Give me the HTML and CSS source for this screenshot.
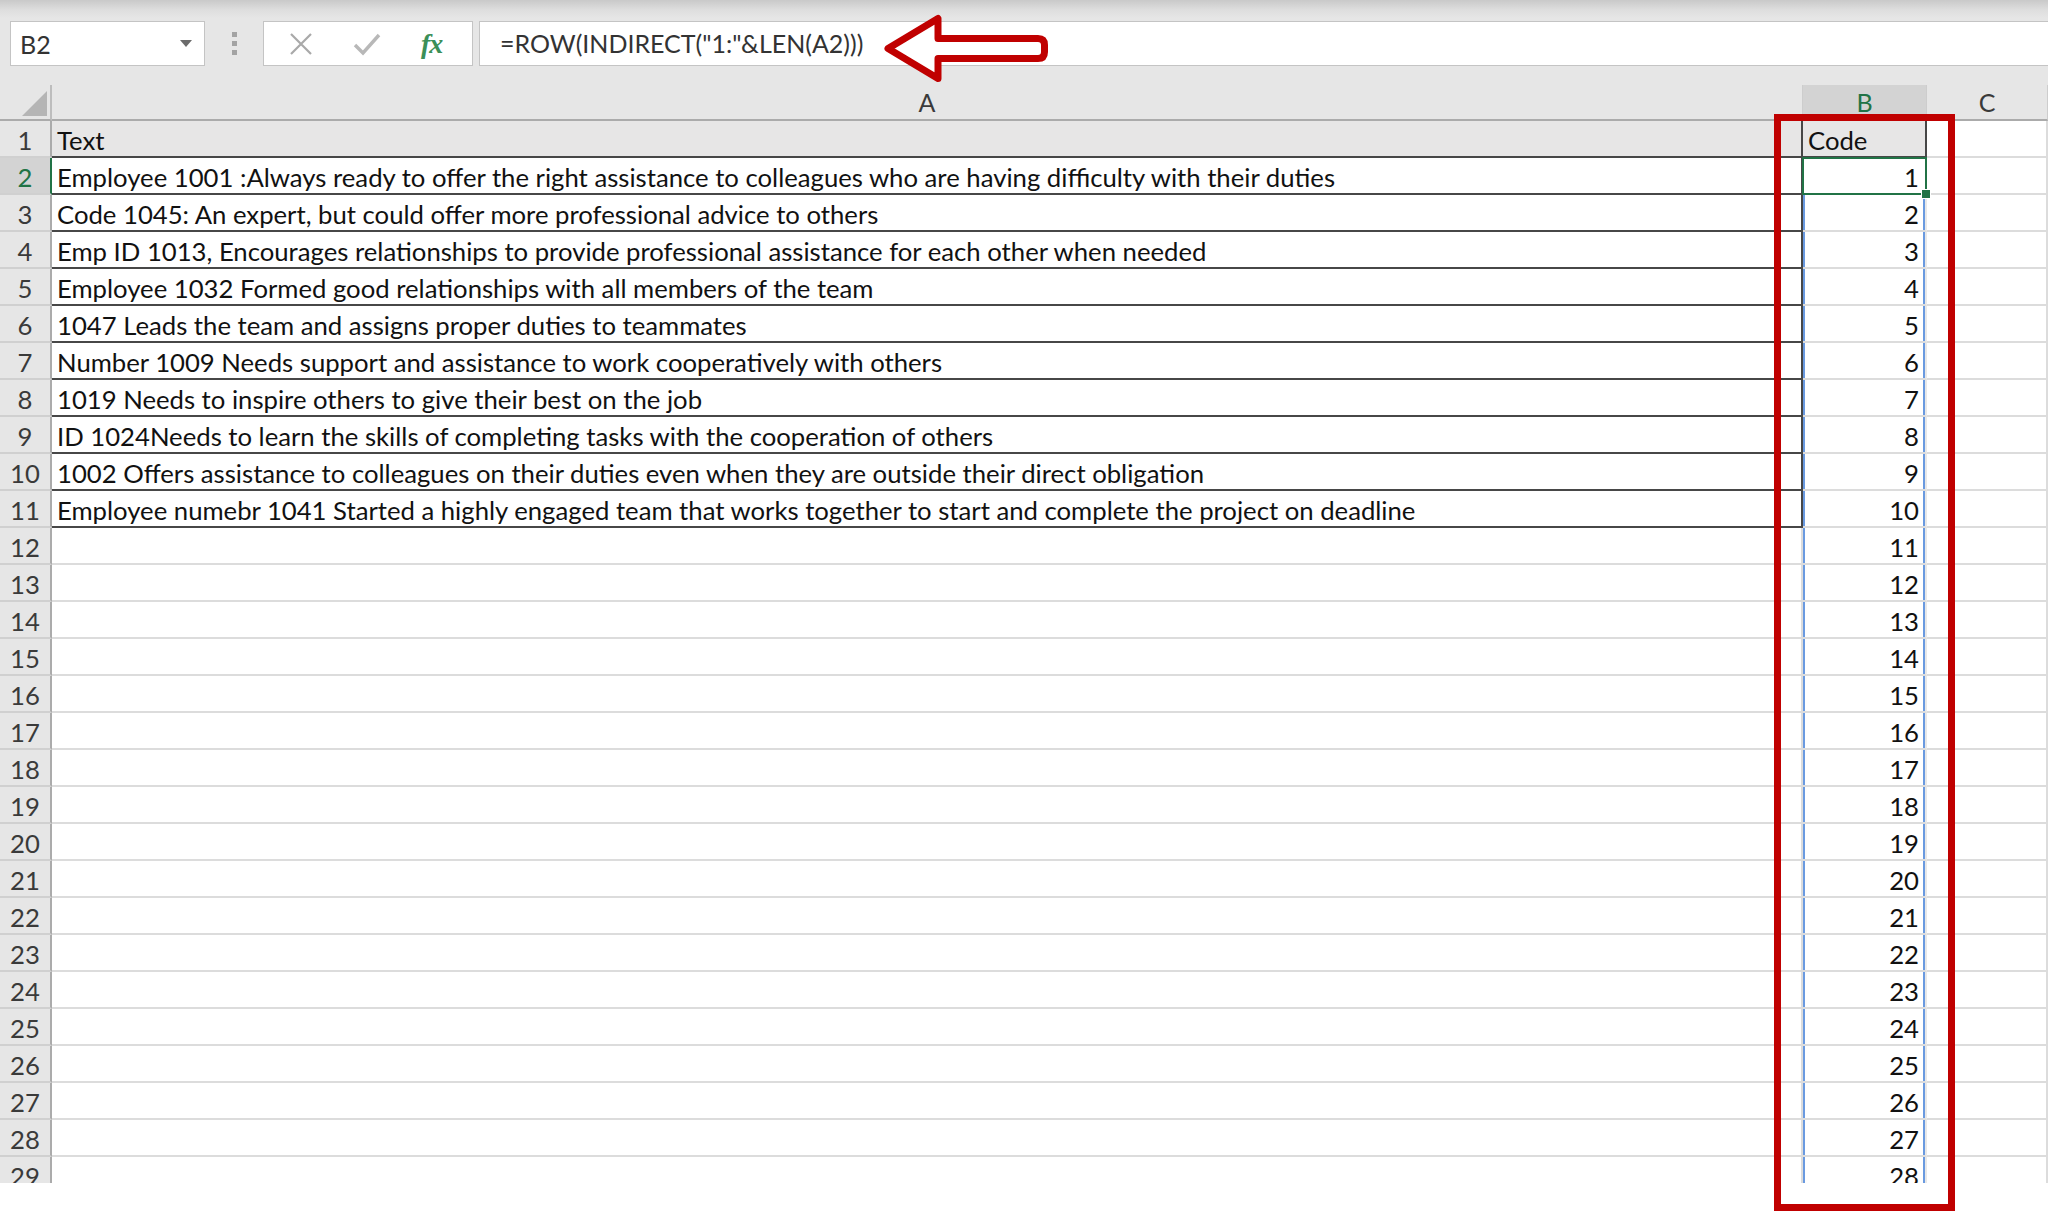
FILE: index.html
```html
<!DOCTYPE html>
<html>
<head>
<meta charset="utf-8">
<link rel="stylesheet" href="styles.css">
</head>
<body>
<div class="app">
  <div class="toolbar">
    <div class="namebox">
      <span class="nb-text">B2</span>
      <svg class="nb-caret" width="12" height="7" viewBox="0 0 12 7"><polygon points="0,0 12,0 6,7" fill="#6b6b6b"/></svg>
    </div>
    <div class="grip"><span></span><span></span><span></span></div>
    <div class="fxbox">
      <svg class="ic" width="24" height="24" viewBox="0 0 24 24"><path d="M2 2 L22 22 M22 2 L2 22" stroke="#a9a9a9" stroke-width="2.2" fill="none"/></svg>
      <svg class="ic" width="28" height="24" viewBox="0 0 28 24"><path d="M2 13 L10 21 L26 3" stroke="#b8b8b8" stroke-width="3.4" fill="none"/></svg>
      <span class="fx">fx</span>
    </div>
    <div class="formula">=ROW(INDIRECT("1:"&amp;LEN(A2)))</div>
  </div>

  <div class="sheet">
    <div class="row head">
      <div class="corner"><svg width="50" height="34" viewBox="0 0 50 34"><polygon points="22,31 47,31 47,6" fill="#b5b5b5"/></svg></div>
      <div class="colh">A</div>
      <div class="colh sel">B</div>
      <div class="colh">C</div>
    </div>

    <div class="row"><div class="rh">1</div><div class="ca dark title">Text</div><div class="cb dark title left">Code</div><div class="cc"></div></div>
    <div class="row"><div class="rh sel">2</div><div class="ca dark">Employee 1001 :Always ready to offer the right assistance to colleagues who are having difficulty with their duties</div><div class="cb active">1<span class="handle"></span></div><div class="cc"></div></div>
    <div class="row"><div class="rh">3</div><div class="ca dark">Code 1045: An expert, but could offer more professional advice to others</div><div class="cb blue">2</div><div class="cc"></div></div>
    <div class="row"><div class="rh">4</div><div class="ca dark">Emp ID 1013, Encourages relationships to provide professional assistance for each other when needed</div><div class="cb blue">3</div><div class="cc"></div></div>
    <div class="row"><div class="rh">5</div><div class="ca dark">Employee 1032 Formed good relationships with all members of the team</div><div class="cb blue">4</div><div class="cc"></div></div>
    <div class="row"><div class="rh">6</div><div class="ca dark">1047 Leads the team and assigns proper duties to teammates</div><div class="cb blue">5</div><div class="cc"></div></div>
    <div class="row"><div class="rh">7</div><div class="ca dark">Number 1009 Needs support and assistance to work cooperatively with others</div><div class="cb blue">6</div><div class="cc"></div></div>
    <div class="row"><div class="rh">8</div><div class="ca dark">1019 Needs to inspire others to give their best on the job</div><div class="cb blue">7</div><div class="cc"></div></div>
    <div class="row"><div class="rh">9</div><div class="ca dark">ID 1024Needs to learn the skills of completing tasks with the cooperation of others</div><div class="cb blue">8</div><div class="cc"></div></div>
    <div class="row"><div class="rh">10</div><div class="ca dark">1002 Offers assistance to colleagues on their duties even when they are outside their direct obligation</div><div class="cb blue">9</div><div class="cc"></div></div>
    <div class="row"><div class="rh">11</div><div class="ca dark">Employee numebr 1041 Started a highly engaged team that works together to start and complete the project on deadline</div><div class="cb blue">10</div><div class="cc"></div></div>
    <div class="row"><div class="rh">12</div><div class="ca"></div><div class="cb blue">11</div><div class="cc"></div></div>
    <div class="row"><div class="rh">13</div><div class="ca"></div><div class="cb blue">12</div><div class="cc"></div></div>
    <div class="row"><div class="rh">14</div><div class="ca"></div><div class="cb blue">13</div><div class="cc"></div></div>
    <div class="row"><div class="rh">15</div><div class="ca"></div><div class="cb blue">14</div><div class="cc"></div></div>
    <div class="row"><div class="rh">16</div><div class="ca"></div><div class="cb blue">15</div><div class="cc"></div></div>
    <div class="row"><div class="rh">17</div><div class="ca"></div><div class="cb blue">16</div><div class="cc"></div></div>
    <div class="row"><div class="rh">18</div><div class="ca"></div><div class="cb blue">17</div><div class="cc"></div></div>
    <div class="row"><div class="rh">19</div><div class="ca"></div><div class="cb blue">18</div><div class="cc"></div></div>
    <div class="row"><div class="rh">20</div><div class="ca"></div><div class="cb blue">19</div><div class="cc"></div></div>
    <div class="row"><div class="rh">21</div><div class="ca"></div><div class="cb blue">20</div><div class="cc"></div></div>
    <div class="row"><div class="rh">22</div><div class="ca"></div><div class="cb blue">21</div><div class="cc"></div></div>
    <div class="row"><div class="rh">23</div><div class="ca"></div><div class="cb blue">22</div><div class="cc"></div></div>
    <div class="row"><div class="rh">24</div><div class="ca"></div><div class="cb blue">23</div><div class="cc"></div></div>
    <div class="row"><div class="rh">25</div><div class="ca"></div><div class="cb blue">24</div><div class="cc"></div></div>
    <div class="row"><div class="rh">26</div><div class="ca"></div><div class="cb blue">25</div><div class="cc"></div></div>
    <div class="row"><div class="rh">27</div><div class="ca"></div><div class="cb blue">26</div><div class="cc"></div></div>
    <div class="row"><div class="rh">28</div><div class="ca"></div><div class="cb blue">27</div><div class="cc"></div></div>
    <div class="row"><div class="rh">29</div><div class="ca"></div><div class="cb blue">28</div><div class="cc"></div></div>
  </div>

  <div class="callout-box"></div>
  <svg class="callout-arrow" width="190" height="82" viewBox="870 8 190 82">
    <path d="M888 48.5 L938 18.5 L938 38.5 L1038 38.5 Q1044.5 38.5 1044.5 45 L1044.5 52 Q1044.5 58.5 1038 58.5 L938 58.5 L938 78.5 Z" fill="#ffffff" stroke="#c00000" stroke-width="7" stroke-linejoin="round"/>
  </svg>
</div>
</body>
</html>
```
FILE: styles.css
```css
html, body {
  margin: 0;
  padding: 0;
  background: #ffffff;
}
body {
  width: 2048px;
  height: 1211px;
  overflow: hidden;
  font-family: Lato, "Open Sans", sans-serif;
  color: #1b1b1b;
}
.app {
  position: relative;
  width: 2048px;
  height: 1211px;
}

/* ---------- formula bar ---------- */
.toolbar {
  height: 85px;
  box-sizing: border-box;
  padding-top: 21px;
  display: flex;
  align-items: flex-start;
  background: linear-gradient(#c9c9c9 0px, #dedede 10px, #e6e6e6 18px, #e6e6e6 100%);
}
.namebox {
  margin-left: 10px;
  width: 195px;
  height: 45px;
  box-sizing: border-box;
  background: #fff;
  border: 1px solid #c4c4c4;
  display: flex;
  align-items: center;
  justify-content: space-between;
  padding: 0 12px 0 9px;
  font-size: 25px;
  color: #333;
}
.grip {
  width: 58px;
  height: 45px;
  display: flex;
  flex-direction: column;
  align-items: center;
  justify-content: center;
  gap: 4px;
}
.grip span {
  width: 5px;
  height: 5px;
  background: #a3a3a3;
}
.fxbox {
  width: 210px;
  height: 45px;
  box-sizing: border-box;
  background: #fff;
  border: 1px solid #c4c4c4;
  display: flex;
  align-items: center;
  padding-left: 25px;
  gap: 40px;
}
.fx {
  font-family: "Liberation Serif", serif;
  font-style: italic;
  font-weight: bold;
  font-size: 28px;
  color: #3b8f58;
  letter-spacing: -1px;
}
.formula {
  flex: 1;
  margin-left: 6px;
  height: 45px;
  box-sizing: border-box;
  background: #fff;
  border-top: 1px solid #c4c4c4;
  border-bottom: 1px solid #c4c4c4;
  border-left: 1px solid #c4c4c4;
  padding-left: 20px;
  line-height: 43px;
  font-size: 25px;
  color: #333;
}

/* ---------- grid ---------- */
.sheet {
  height: 1098px;
  overflow: hidden;
  display: flex;
  flex-direction: column;
}
.row {
  display: grid;
  grid-template-columns: 52px 1751px 124px 1fr;
  grid-template-rows: 37px;
  height: 37px;
  flex: none;
}
.row > div {
  box-sizing: border-box;
  height: 37px;
  font-size: 25.7px;
  line-height: 38.5px;
  white-space: nowrap;
  overflow: hidden;
}
.row.head {
  height: 36px;
  grid-template-rows: 36px;
  background: #e6e6e6;
}
.row.head > div {
  height: 36px;
  line-height: 35px;
  font-size: 25px;
}
.corner {
  border-right: 2px solid #bdbdbd;
  border-bottom: 2px solid #ababab;
}
.corner svg {
  display: block;
}
.colh {
  text-align: center;
  color: #3a3a3a;
  border-right: 1px solid #cdcdcd;
  border-bottom: 2px solid #ababab;
}
.colh.sel {
  background: #d3d3d3;
  color: #217346;
  border-bottom-color: #217346;
}

.rh {
  background: #e6e6e6;
  color: #3a3a3a;
  text-align: center;
  border-right: 2px solid #ababab;
  border-bottom: 2px solid #d0d0d0;
}
.rh.sel {
  background: #d3d3d3;
  color: #217346;
  border-right-color: #217346;
}

.ca, .cb, .cc {
  border-right: 2px solid #dcdcdc;
  border-bottom: 2px solid #dcdcdc;
  background: #fff;
}
.ca {
  padding-left: 5px;
  color: #111;
}
.ca.dark {
  border-right-color: #474747;
  border-bottom-color: #474747;
}
.cb {
  text-align: right;
  padding-right: 6px;
  color: #111;
  position: relative;
  overflow: visible !important;
}
.cb.dark {
  border-right-color: #474747;
  border-bottom-color: #474747;
}
.cb.left {
  text-align: left;
  padding-left: 5px;
}
.title {
  background: #e7e6e6;
}
.cb.blue {
  box-shadow: inset 2px 0 0 #6a9ae0, inset -2px 0 0 #6a9ae0;
  border-right-color: #e8e8e8;
}
.cb.active::after {
  content: "";
  position: absolute;
  left: -1px;
  top: -1px;
  right: -2px;
  bottom: -2px;
  border: 2px solid #217346;
}
.handle {
  position: absolute;
  right: -6px;
  bottom: -6px;
  width: 8px;
  height: 8px;
  background: #217346;
  border: 1px solid #fff;
  z-index: 2;
}

/* ---------- annotations ---------- */
.callout-box {
  position: absolute;
  left: 1774px;
  top: 114px;
  width: 181px;
  height: 1097px;
  box-sizing: border-box;
  border: 7px solid #c00000;
}
.callout-arrow {
  position: absolute;
  left: 870px;
  top: 8px;
}
```
